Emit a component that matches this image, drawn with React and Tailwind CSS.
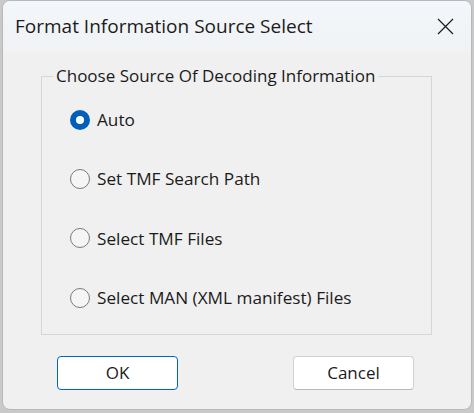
import { useState } from 'react'

const options = [
  'Auto',
  'Set TMF Search Path',
  'Select TMF Files',
  'Select MAN (XML manifest) Files',
]

function Radio({ checked }) {
  if (checked) {
    return (
      <span className="flex items-center justify-center w-[20px] h-[20px] rounded-full bg-[#005fb8] shrink-0">
        <span className="w-[8px] h-[8px] rounded-full bg-white" />
      </span>
    )
  }
  return <span className="w-[20px] h-[20px] rounded-full border-[1.5px] border-[#7a7a7a] bg-[#f5f5f5] shrink-0" />
}

export default function App() {
  const [selected, setSelected] = useState(0)

  return (
    <div
      className="w-[474px] h-[413px] bg-[#c9c9c9] overflow-hidden text-[#1b1b1b]"
      style={{ fontFamily: '"Open Sans", "Noto Sans", sans-serif' }}
    >
      <div className="ml-[2px] w-[470px] h-[410px] rounded-[8px] border border-[#b8b8b8] bg-[#f0f0f0] flex flex-col overflow-hidden">
        {/* Title bar */}
        <div className="h-[52px] shrink-0 flex items-center justify-between pl-[12px] pr-[17px] bg-gradient-to-b from-[#f3f7fb] to-[#f0f2f4]">
          <span className="text-[19px] leading-none pb-[1px]">Format Information Source Select</span>
          <svg width="17" height="17" viewBox="0 0 17 17" className="mt-[-2px]">
            <path d="M1 1 L16 16 M16 1 L1 16" stroke="#1b1b1b" strokeWidth="1.2" />
          </svg>
        </div>

        {/* Group box */}
        <fieldset className="mt-[13px] ml-[38px] w-[391px] border border-[#d6d6d6]">
          <legend className="ml-[11px] px-[3px] text-[17px] leading-[20px]">Choose Source Of Decoding Information</legend>
          <div className="pt-[4px] pb-[7px] pl-[28px]">
            {options.map((label, i) => (
              <label
                key={label}
                onClick={() => setSelected(i)}
                className="h-[59.3px] flex items-center gap-[7px] cursor-default"
              >
                <Radio checked={selected === i} />
                <span className="text-[17.2px] leading-none">{label}</span>
              </label>
            ))}
          </div>
        </fieldset>

        {/* Buttons */}
        <div className="mt-[21px] flex pl-[54px] gap-[115px]">
          <button className="w-[121px] h-[34px] rounded-[4px] border-[1.5px] border-[#0067c0] bg-white text-[17px]">
            OK
          </button>
          <button className="w-[121px] h-[34px] rounded-[4px] border border-[#d0d0d0] border-b-[#b8b8b8] bg-white text-[17px]">
            Cancel
          </button>
        </div>
      </div>
    </div>
  )
}
